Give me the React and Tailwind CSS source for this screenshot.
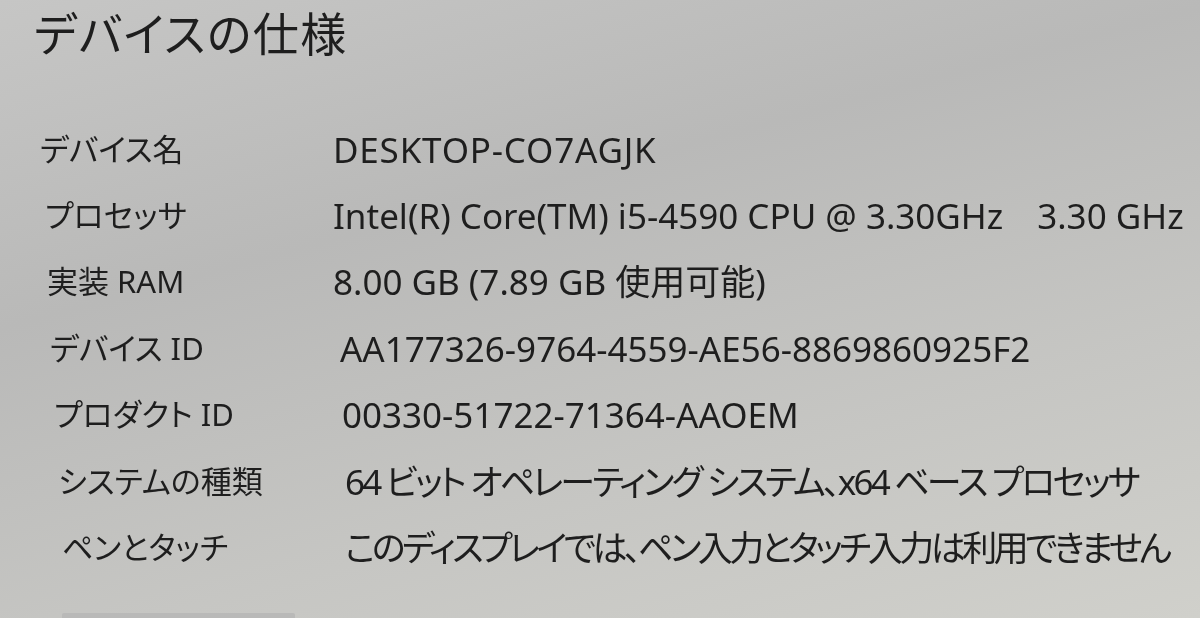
export default function App() {
  const rows = [
    { label: "デバイス名", value: "DESKTOP-CO7AGJK", lp: "pl-[0px]", vp: "pl-[0px]", vt: "tracking-[0.8px]" },
    { label: "プロセッサ", value: null, lp: "pl-[5px]", vp: "pl-[0px]", vt: "tracking-[0px]" },
    { label: "実装 RAM", value: "8.00 GB (7.89 GB 使用可能)", lp: "pl-[7px]", vp: "pl-[0px]", vt: "tracking-[0px]" },
    { label: "デバイス ID", value: "AA177326-9764-4559-AE56-8869860925F2", lp: "pl-[10px]", vp: "pl-[7px]", vt: "tracking-[0px]" },
    { label: "プロダクト ID", value: "00330-51722-71364-AAOEM", lp: "pl-[14px]", vp: "pl-[9px]", vt: "tracking-[0px]" },
    { label: "システムの種類", value: "64 ビット オペレーティング システム、x64 ベース プロセッサ", lp: "pl-[18px]", vp: "pl-[12px]", vt: "tracking-[-2.8px]" },
    { label: "ペンとタッチ", value: "このディスプレイでは、ペン入力とタッチ入力は利用できません", lp: "pl-[22px]", vp: "pl-[12px]", vt: "tracking-[-3.5px]" },
  ];
  return (
    <div className="w-[1200px] h-[618px] overflow-hidden bg-[linear-gradient(165deg,#c6c6c5_0%,#b9b9b8_35%,#c6c6c3_70%,#d0d0cb_100%)] text-[#1e1e1e] flex flex-col [font-family:'Noto_Sans','Noto_Sans_CJK_JP',sans-serif] [font-feature-settings:'palt'] blur-[0.4px]">
      <h1 className="pl-[34px] pt-[6px] text-[46px] leading-[54px] font-normal tracking-[1.5px]">
        デバイスの仕様
      </h1>
      <div className="mt-[56px] flex flex-col pl-[40px]">
        {rows.map((r, i) => (
          <div key={i} className="flex items-center h-[66.4px]">
            <div className={`w-[293px] shrink-0 text-[31px] leading-none tracking-[0px] ${r.lp}`}>{r.label}</div>
            <div className={`text-[35px] leading-none whitespace-nowrap flex gap-[34px] ${r.vp} ${r.vt}`}>
              {r.value === null ? (
                <>
                  <span>Intel(R) Core(TM) i5-4590 CPU @ 3.30GHz</span>
                  <span>3.30 GHz</span>
                </>
              ) : (
                <span>{r.value}</span>
              )}
            </div>
          </div>
        ))}
      </div>
      <div className="mt-auto ml-[62px] w-[233px] h-[5px] bg-[#b9b9b8] rounded-t-[2px]" />
    </div>
  );
}
